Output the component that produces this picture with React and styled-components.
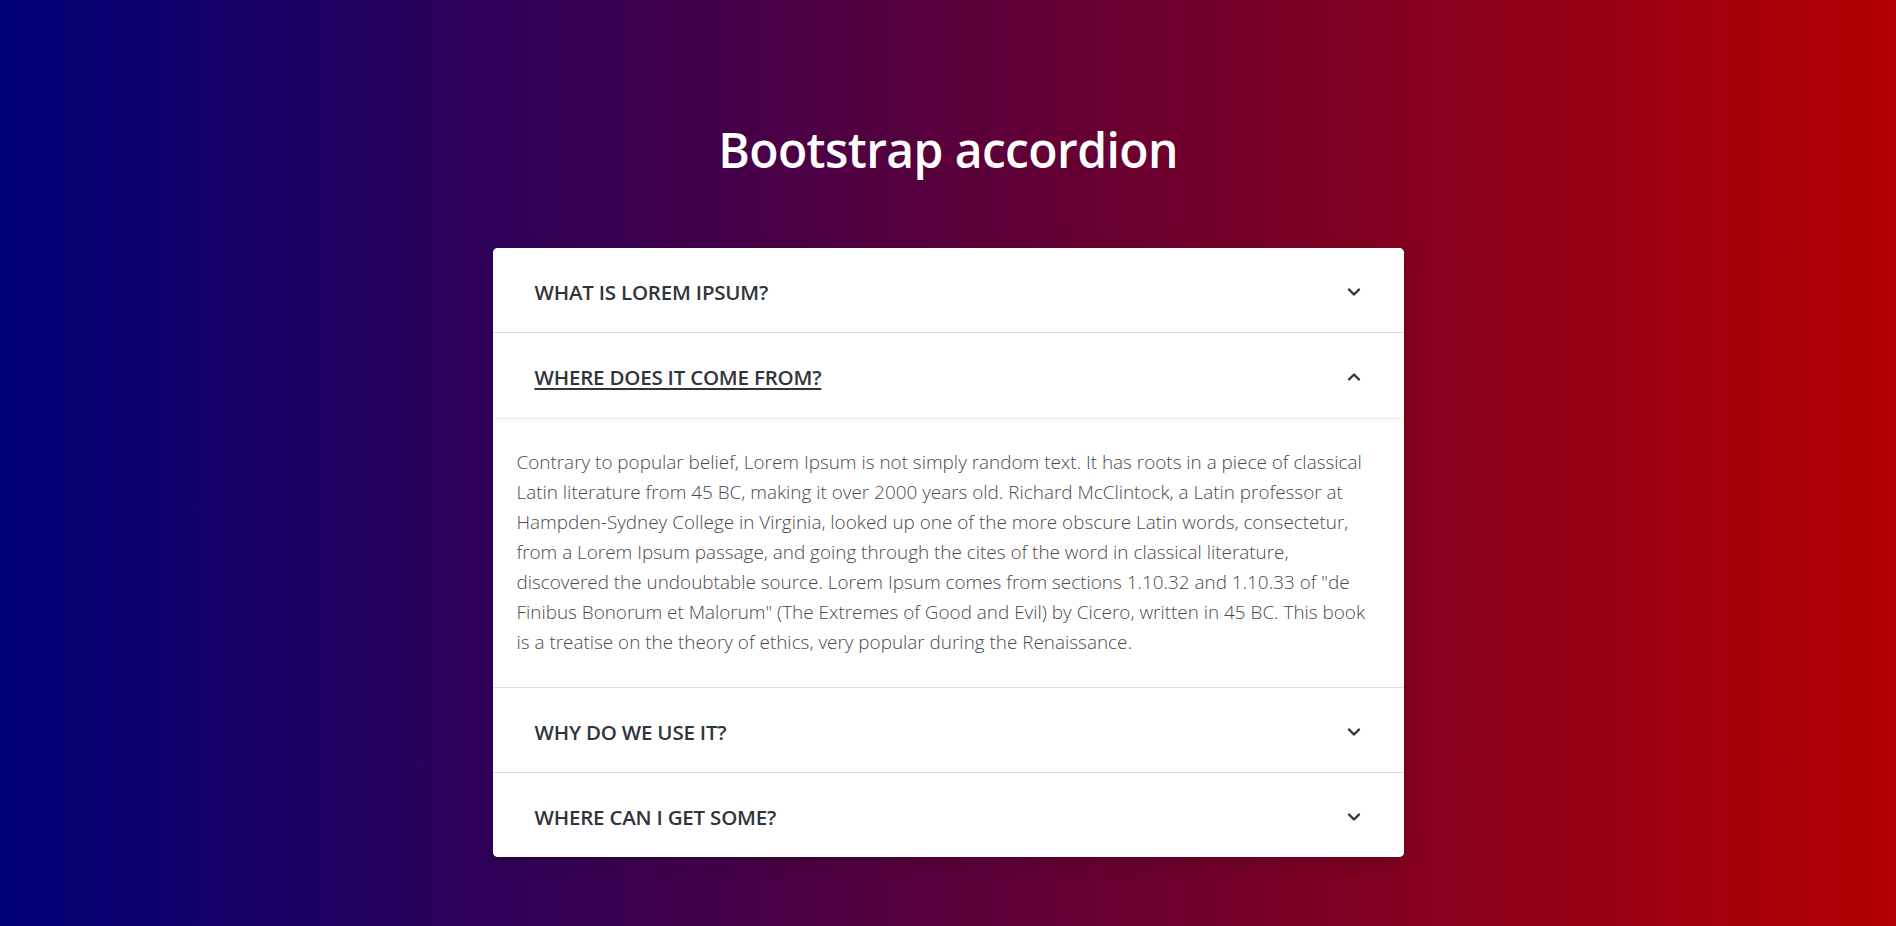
import React, { useState } from "react";
import styled, { createGlobalStyle } from "styled-components";

const GlobalStyle = createGlobalStyle`
  * { box-sizing: border-box; }
  html, body { margin: 0; padding: 0; }
  body {
    font-family: "Open Sans", "Noto Sans", sans-serif;
    background: linear-gradient(90deg, #000077 0%, #b30000 100%);
    min-height: 100vh;
  }
`;

const Page = styled.main`
  min-height: 926px;
  display: flex;
  flex-direction: column;
  align-items: center;
  padding-top: 118px;
`;

const Title = styled.h1`
  margin: 0 0 66px;
  color: #ffffff;
  font-family: "Open Sans", sans-serif;
  font-weight: 600;
  font-size: 48px;
  line-height: 64px;
  letter-spacing: -0.6px;
`;

const Accordion = styled.section`
  width: 911px;
  background: #fff;
  border-radius: 5px;
  box-shadow: 0 6px 18px rgba(0, 0, 0, 0.18);
  overflow: hidden;
`;

const Item = styled.div`
  & + & { border-top: 1px solid #dedede; }
`;

const Header = styled.button`
  width: 100%;
  height: 84px;
  display: flex;
  align-items: center;
  justify-content: space-between;
  padding: 4px 42px 0;
  border: 0;
  background: #fff;
  cursor: pointer;
  position: relative;
  box-shadow: ${(p) => (p.$open ? "0 3px 6px rgba(0,0,0,0.06)" : "none")};
  z-index: 1;
`;

const HeaderText = styled.span`
  font-family: "Open Sans", sans-serif;
  font-weight: 600;
  font-size: 20.5px;
  letter-spacing: -0.2px;
  color: #30353b;
  text-transform: uppercase;
  text-decoration: ${(p) => (p.$open ? "underline" : "none")};
  text-underline-offset: 3px;
  text-decoration-thickness: 2px;
`;

const Chevron = styled.svg`
  width: 16px;
  height: 16px;
  flex: none;
`;

const Body = styled.div`
  padding: 30px 24px 30px 24px;
  font-family: "Open Sans", sans-serif;
  font-weight: 300;
  font-size: 18.9px;
  line-height: 30px;
  color: #4a4a4a;
`;

const items = [
  { q: "What is Lorem Ipsum?", a: "" },
  {
    q: "Where does it come from?",
    a: 'Contrary to popular belief, Lorem Ipsum is not simply random text. It has roots in a piece of classical Latin literature from 45 BC, making it over 2000 years old. Richard McClintock, a Latin professor at Hampden-Sydney College in Virginia, looked up one of the more obscure Latin words, consectetur, from a Lorem Ipsum passage, and going through the cites of the word in classical literature, discovered the undoubtable source. Lorem Ipsum comes from sections 1.10.32 and 1.10.33 of "de Finibus Bonorum et Malorum" (The Extremes of Good and Evil) by Cicero, written in 45 BC. This book is a treatise on the theory of ethics, very popular during the Renaissance.',
  },
  { q: "Why do we use it?", a: "" },
  { q: "Where can I get some?", a: "" },
];

function Arrow({ up }) {
  return (
    <Chevron viewBox="0 0 16 16" fill="none">
      <path
        d={up ? "M3 10.5 L8 5.5 L13 10.5" : "M3 5.5 L8 10.5 L13 5.5"}
        stroke="#30353b"
        strokeWidth="2.4"
        strokeLinecap="round"
        strokeLinejoin="round"
      />
    </Chevron>
  );
}

export default function App() {
  const [open, setOpen] = useState(1);
  return (
    <>
      <GlobalStyle />
      <Page>
        <Title>Bootstrap accordion</Title>
        <Accordion>
          {items.map((it, i) => (
            <Item key={i}>
              <Header $open={open === i} onClick={() => setOpen(open === i ? -1 : i)}>
                <HeaderText $open={open === i}>{it.q}</HeaderText>
                <Arrow up={open === i} />
              </Header>
              {open === i && <Body>{it.a}</Body>}
            </Item>
          ))}
        </Accordion>
      </Page>
    </>
  );
}
